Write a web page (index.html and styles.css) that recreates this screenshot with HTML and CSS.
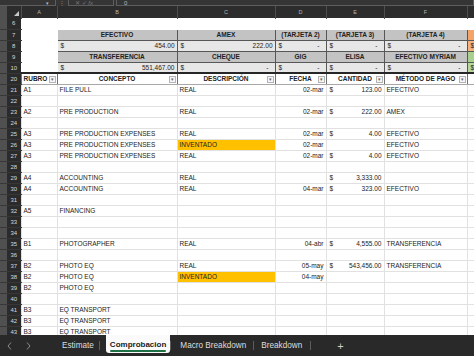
FILE: index.html
```html
<!DOCTYPE html>
<html lang="es">
<head>
    <meta charset="UTF-8">
    <title>Comprobacion</title>
    <link rel="stylesheet" href="styles.css">
</head>
<body>
    <div class="app">
        <div class="formula-bar">
            <div class="name-box"><span class="caret">▾</span></div>
            <div class="fb-dots">⋮</div>
            <div class="fx-box">✕ ✓ <i>fx</i></div>
            <div class="input-box">0</div>
        </div>

        <div class="sheet-wrap">
            <table class="sheet">
                <colgroup>
                    <col class="c-rh"><col class="c-a"><col class="c-b"><col class="c-c">
                    <col class="c-d"><col class="c-e"><col class="c-f"><col class="c-g">
                </colgroup>
                <tr class="cols">
                    <th class="corner"><span class="tri"></span></th>
                    <th>A</th><th>B</th><th>C</th><th>D</th><th>E</th><th>F</th><th></th>
                </tr>
                <tr class="plain">
                    <th class="rh">6</th><td></td><td></td><td></td><td></td><td></td><td></td><td></td>
                </tr>
                <tr class="plain">
                    <th class="rh">7</th><td></td>
                    <td class="sh">EFECTIVO</td><td class="sh">AMEX</td><td class="sh">(TARJETA 2)</td>
                    <td class="sh">(TARJETA 3)</td><td class="sh">(TARJETA 4)</td><td class="sh g1"></td>
                </tr>
                <tr class="plain">
                    <th class="rh">8</th><td></td>
                    <td class="sv"><span class="cur">$</span>454.00</td>
                    <td class="sv"><span class="cur">$</span>222.00</td>
                    <td class="sv dash"><span class="cur">$</span>-</td>
                    <td class="sv dash"><span class="cur">$</span>-</td>
                    <td class="sv dash"><span class="cur">$</span>-</td>
                    <td class="sv g2"><span class="cur">$</span></td>
                </tr>
                <tr class="plain">
                    <th class="rh">9</th><td></td>
                    <td class="sh">TRANSFERENCIA</td><td class="sh">CHEQUE</td><td class="sh">GIG</td>
                    <td class="sh">ELISA</td><td class="sh">EFECTIVO MYRIAM</td><td class="sh g3"></td>
                </tr>
                <tr class="plain">
                    <th class="rh">10</th><td></td>
                    <td class="sv"><span class="cur">$</span>551,467.00</td>
                    <td class="sv dash"><span class="cur">$</span>-</td>
                    <td class="sv dash"><span class="cur">$</span>-</td>
                    <td class="sv dash"><span class="cur">$</span>-</td>
                    <td class="sv dash"><span class="cur">$</span>-</td>
                    <td class="sv g4"><span class="cur">$</span></td>
                </tr>
                <tr class="head">
                    <th class="rh">20</th>
                    <td class="left">RUBRO<span class="filter">▾</span></td>
                    <td>CONCEPTO<span class="filter">▾</span></td>
                    <td>DESCRIPCIÓN<span class="filter">▾</span></td>
                    <td>FECHA<span class="filter">▾</span></td>
                    <td>CANTIDAD<span class="filter">▾</span></td>
                    <td>MÉTODO DE PAGO<span class="filter">▾</span></td>
                    <td class="open"></td>
                </tr>
                <tr><th class="rh">21</th><td>A1</td><td>FILE PULL</td><td>REAL</td><td class="num">02-mar</td><td class="num"><span class="cur">$</span>123.00</td><td>EFECTIVO</td><td></td></tr>
                <tr><th class="rh">22</th><td></td><td></td><td></td><td></td><td></td><td></td><td></td></tr>
                <tr><th class="rh">23</th><td>A2</td><td>PRE PRODUCTION</td><td>REAL</td><td class="num">02-mar</td><td class="num"><span class="cur">$</span>222.00</td><td>AMEX</td><td></td></tr>
                <tr><th class="rh">24</th><td></td><td></td><td></td><td></td><td></td><td></td><td></td></tr>
                <tr><th class="rh">25</th><td>A3</td><td>PRE PRODUCTION EXPENSES</td><td>REAL</td><td class="num">02-mar</td><td class="num"><span class="cur">$</span>4.00</td><td>EFECTIVO</td><td></td></tr>
                <tr><th class="rh">26</th><td>A3</td><td>PRE PRODUCTION EXPENSES</td><td class="flag">INVENTADO</td><td class="num">02-mar</td><td></td><td>EFECTIVO</td><td></td></tr>
                <tr><th class="rh">27</th><td>A3</td><td>PRE PRODUCTION EXPENSES</td><td>REAL</td><td class="num">02-mar</td><td class="num"><span class="cur">$</span>4.00</td><td>EFECTIVO</td><td></td></tr>
                <tr><th class="rh">28</th><td></td><td></td><td></td><td></td><td></td><td></td><td></td></tr>
                <tr><th class="rh">29</th><td>A4</td><td>ACCOUNTING</td><td>REAL</td><td></td><td class="num"><span class="cur">$</span>3,333.00</td><td></td><td></td></tr>
                <tr><th class="rh">30</th><td>A4</td><td>ACCOUNTING</td><td>REAL</td><td class="num">04-mar</td><td class="num"><span class="cur">$</span>323.00</td><td>EFECTIVO</td><td></td></tr>
                <tr><th class="rh">31</th><td></td><td></td><td></td><td></td><td></td><td></td><td></td></tr>
                <tr><th class="rh">32</th><td>A5</td><td>FINANCING</td><td></td><td></td><td></td><td></td><td></td></tr>
                <tr><th class="rh">33</th><td></td><td></td><td></td><td></td><td></td><td></td><td></td></tr>
                <tr><th class="rh">34</th><td></td><td></td><td></td><td></td><td></td><td></td><td></td></tr>
                <tr><th class="rh">35</th><td>B1</td><td>PHOTOGRAPHER</td><td>REAL</td><td class="num">04-abr</td><td class="num"><span class="cur">$</span>4,555.00</td><td>TRANSFERENCIA</td><td></td></tr>
                <tr><th class="rh">36</th><td></td><td></td><td></td><td></td><td></td><td></td><td></td></tr>
                <tr><th class="rh">37</th><td>B2</td><td>PHOTO EQ</td><td>REAL</td><td class="num">05-may</td><td class="num"><span class="cur">$</span>543,456.00</td><td>TRANSFERENCIA</td><td></td></tr>
                <tr><th class="rh">38</th><td>B2</td><td>PHOTO EQ</td><td class="flag">INVENTADO</td><td class="num">04-may</td><td></td><td></td><td></td></tr>
                <tr><th class="rh">39</th><td>B2</td><td>PHOTO EQ</td><td></td><td></td><td></td><td></td><td></td></tr>
                <tr><th class="rh">40</th><td></td><td></td><td></td><td></td><td></td><td></td><td></td></tr>
                <tr><th class="rh">41</th><td>B3</td><td>EQ TRANSPORT</td><td></td><td></td><td></td><td></td><td></td></tr>
                <tr><th class="rh">42</th><td>B3</td><td>EQ TRANSPORT</td><td></td><td></td><td></td><td></td><td></td></tr>
                <tr><th class="rh">43</th><td>B3</td><td>EQ TRANSPORT</td><td></td><td></td><td></td><td></td><td></td></tr>
            </table>
        </div>

        <div class="tabs">
            <span class="nav first">
                <svg width="5" height="8" viewBox="0 0 5 8"><polyline points="4,0.5 1,4 4,7.5" fill="none" stroke="#8c8c8c" stroke-width="1"/></svg>
            </span>
            <span class="nav">
                <svg width="5" height="8" viewBox="0 0 5 8"><polyline points="1,0.5 4,4 1,7.5" fill="none" stroke="#8c8c8c" stroke-width="1"/></svg>
            </span>
            <span class="tab t-estimate">Estimate</span>
            <span class="sep"></span>
            <span class="tab active">Comprobacion</span>
            <span class="sep"></span>
            <span class="tab t-macro">Macro Breakdown</span>
            <span class="sep s-macro"></span>
            <span class="tab t-break">Breakdown</span>
            <span class="sep s-break"></span>
            <span class="add">+</span>
        </div>
    </div>
</body>
</html>
```

FILE: styles.css
```css
* {
    margin: 0;
    padding: 0;
    box-sizing: border-box;
}

body {
    font-family: 'Liberation Sans', Arial, sans-serif;
    background: #2a2a2a;
    width: 474px;
    height: 356px;
    overflow: hidden;
}

.app {
    display: flex;
    flex-direction: column;
    height: 356px;
}

/* formula bar, only its lower edge is on screen */
.formula-bar {
    height: 6px;
    background: #353535;
    display: flex;
    align-items: flex-end;
    overflow: hidden;
    color: #9a9a9a;
    font-size: 6px;
    line-height: 6px;
}

.name-box {
    width: 56px;
    height: 6px;
    border: 1px solid #5e5e5e;
    border-top: none;
    border-left: none;
    text-align: right;
    padding-right: 6px;
}

.caret {
    color: #bbb;
    font-size: 5px;
}

.fb-dots {
    width: 12px;
    text-align: center;
    color: #888;
}

.fx-box {
    width: 46px;
    height: 6px;
    border: 1px solid #5e5e5e;
    border-top: none;
    padding-left: 6px;
    color: #777;
}

.input-box {
    flex: 1;
    height: 6px;
    margin-left: 2px;
    border: 1px solid #5e5e5e;
    border-top: none;
    padding-left: 7px;
    color: #bbb;
}

.sheet-wrap {
    flex: 1;
    overflow: hidden;
    background: #fff;
}

.sheet {
    border-collapse: collapse;
    table-layout: fixed;
    width: 488px;
    font-size: 6.5px;
    color: #222;
}

.c-rh { width: 21px; }
.c-a { width: 36px; }
.c-b { width: 120px; }
.c-c { width: 98px; }
.c-d { width: 51px; }
.c-e { width: 58px; }
.c-f { width: 83px; }
.c-g { width: 21px; }

.sheet td {
    height: 11px;
    padding: 0 2px;
    border: 1px solid #e1e1e1;
    white-space: nowrap;
    overflow: hidden;
    line-height: 9px;
    vertical-align: middle;
}

/* column letters */
.cols th {
    height: 12px;
    background: #2c2c2c;
    color: #b5b5b5;
    font-size: 5.5px;
    font-weight: normal;
    border-right: 1px solid #4e4e4e;
}

.corner {
    position: relative;
    box-shadow: inset 7px 0 #505050;
}

.tri {
    position: absolute;
    right: 2px;
    bottom: 2px;
    border-left: 5px solid transparent;
    border-bottom: 5px solid #c8c8c8;
}

/* row numbers */
.rh {
    background: #2b2b2b;
    color: #d8d8d8;
    font-size: 6px;
    font-weight: normal;
    text-align: center;
    padding-left: 7px;
    box-shadow: inset 7px 0 #505050;
    border-bottom: 1px solid #373737;
}

.plain td {
    border-color: #fff;
}

/* summary block */
.sheet .sh {
    background: #c3c3c3;
    font-weight: bold;
    text-align: center;
    border: 1px solid #575757;
}

.sheet .sv {
    background: #e7e7e7;
    text-align: right;
    border: 1px solid #575757;
}

.sheet .dash {
    padding-right: 6px;
}

.sheet .g1 { background: #f2a469; }
.sheet .g2 { background: #f5b27e; }
.sheet .g3 { background: #a9d08e; }
.sheet .g4 { background: #b6d89d; }

.cur {
    float: left;
    padding-left: 1px;
}

/* table header row */
.head td {
    position: relative;
    font-weight: bold;
    text-align: center;
    border: 1px solid #707070;
    border-top: 2px solid #262626;
    border-bottom: 1px solid #a8a8a8;
}

.head td.left {
    text-align: left;
}

.head td.open {
    border-right-color: #e1e1e1;
}

.filter {
    position: absolute;
    right: 1px;
    top: 2px;
    width: 7px;
    height: 7px;
    border: 1px solid #b3b3b3;
    background: #f5f5f5;
    color: #666;
    font-size: 5px;
    line-height: 5px;
    text-align: center;
    font-weight: normal;
}

.num {
    text-align: right;
}

.sheet .flag {
    background: #ffc000;
}

/* sheet tabs */
.tabs {
    height: 21px;
    background: #292929;
    display: flex;
    align-items: center;
    color: #dedede;
    font-size: 8.2px;
}

.nav {
    display: flex;
    margin-left: 14px;
}

.nav.first {
    margin-left: 7px;
}

.tab {
    white-space: nowrap;
}

.t-estimate {
    margin-left: 31px;
}

.sep {
    width: 1px;
    height: 9px;
    background: #5c5c5c;
    margin-left: 5px;
}

.tab.active {
    align-self: stretch;
    margin-bottom: 3px;
    margin-left: 6px;
    padding: 5px 4px 0;
    background: #fafafa;
    color: #1b1b1b;
    font-weight: bold;
    font-size: 8px;
    border-radius: 0 0 3px 3px;
}

.tab.active::after {
    content: '';
    display: block;
    height: 1.5px;
    margin-top: 1px;
    background: #1e7145;
    border-radius: 1px;
}

.tab.active + .sep {
    margin-left: 0;
}

.t-macro {
    margin-left: 9px;
}

.s-macro {
    margin-left: 7px;
}

.t-break {
    margin-left: 7px;
}

.s-break {
    margin-left: 8px;
}

.add {
    margin-left: 26px;
    font-size: 11px;
    color: #cfcfcf;
}
```
